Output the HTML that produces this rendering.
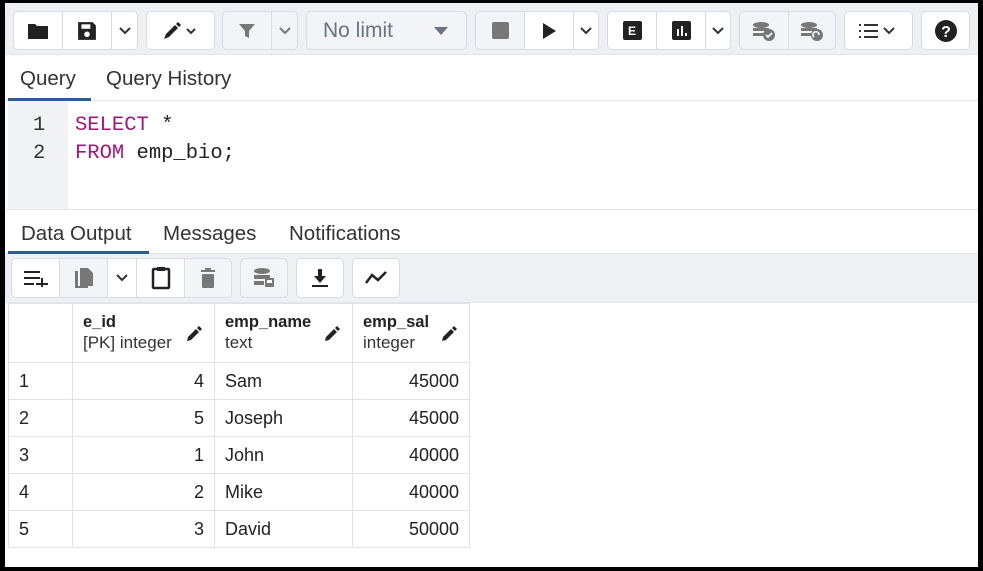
<!DOCTYPE html>
<html><head><meta charset="utf-8"><style>
*{box-sizing:border-box;margin:0;padding:0}
body{width:983px;height:571px;background:#000;position:relative;overflow:hidden;font-family:"Liberation Sans",sans-serif}
#app{position:absolute;left:5px;top:3px;width:973px;height:564px;background:#fff;overflow:hidden}
.tb{position:absolute;left:0;top:0;width:973px;height:52px;background:#eef0f4;border-bottom:1px solid #e2e5ea}
.g{position:absolute;top:8px;height:39px;border:1px solid #d7dbe2;border-radius:5px;background:#fff;display:flex;overflow:hidden}
.g.d{background:#f3f4f7}
.g>div{height:100%;display:flex;align-items:center;justify-content:center;border-right:1px solid #d7dbe2}
.g>div:last-child{border-right:none}
.tabs{position:absolute;left:0;width:973px;border-bottom:1px solid #dfe2e7;font-size:20.5px;color:#333}
.tabs span{position:absolute;top:12px}
.ul{position:absolute;height:3px;background:#2c5f8e;bottom:-1px}
.ed{position:absolute;left:0;top:98px;width:973px;height:108px;font-family:"Liberation Mono",monospace;font-size:20.5px}
.gut{position:absolute;left:3px;top:0;width:60px;height:108px;background:#f2f3f5}
.ln{position:absolute;left:28px;color:#333}
.code{position:absolute;left:70px;color:#222}
.kw{color:#a0157a}
.tb2{position:absolute;left:0;top:251px;width:973px;height:49px;background:#eef0f4;border-bottom:1px solid #e2e5ea}
.g2{position:absolute;top:4px;height:40px;border:1px solid #d7dbe2;border-radius:5px;background:#fff;display:flex;overflow:hidden}
.g2>div{height:100%;display:flex;align-items:center;justify-content:center;border-right:1px solid #d7dbe2}
.g2>div:last-child{border-right:none}
table{position:absolute;left:3px;top:300px;border-collapse:collapse;font-size:18px;color:#222}
td{border:1px solid #dfe2e7;height:37px;padding:0 10px;vertical-align:middle}
th{border:1px solid #dfe2e7;height:59px;text-align:left;font-weight:normal;padding:0 10px;position:relative;vertical-align:middle}
th b{font-size:16.5px;display:block;line-height:20px}
th i{font-style:normal;font-size:17px;display:block;line-height:22px;color:#333}
.pen{position:absolute;right:12px;top:22px}
.r{text-align:right}
</style></head><body><div id="app">
<div class="tb">
 <div class="g" style="left:8px;width:125px"><div style="width:49px"><svg width="22" height="18" viewBox="0 0 22 18"><path d="M1 2h7l2 2h11v13H1z" fill="#222"/></svg></div><div style="width:49px"><svg width="20" height="20" viewBox="0 0 18 18"><path d="M1 1h13l3 3v13H1z" fill="#222"/><rect x="4" y="3" width="8" height="4" fill="#fff"/><circle cx="9" cy="12" r="2.5" fill="#fff"/></svg></div><div style="flex:1"><svg width="12" height="8" viewBox="0 0 12 8"><path d="M1 1l5 5 5-5" stroke="#333" stroke-width="2" fill="none"/></svg></div></div>
 <div class="g" style="left:141px;width:69px"><div style="width:100%"><svg width="40" height="20" viewBox="0 0 40 20"><path d="M3 18l2-5 9-9 3 3-9 9z" fill="#222"/><path d="M15 3l2-2 3 3-2 2z" fill="#222"/><path d="M26 8l4 4 4-4" stroke="#333" stroke-width="2" fill="none"/></svg></div></div>
 <div class="g d" style="left:217px;width:76px"><div style="width:49px"><svg width="18" height="18" viewBox="0 0 18 18"><path d="M1 2h16l-6 7v7l-4-2V9z" fill="#777"/></svg></div><div style="flex:1"><svg width="12" height="8" viewBox="0 0 12 8"><path d="M1 1l5 5 5-5" stroke="#777" stroke-width="2" fill="none"/></svg></div></div>
 <div class="g d" style="left:301px;width:161px"><div style="width:100%;justify-content:space-between;padding:0 18px 0 16px;font-size:21px;color:#6b7280">No limit<svg width="14" height="8"><path d="M0 0h14L7 8z" fill="#6b7280"/></svg></div></div>
 <div class="g" style="left:470px;width:124px"><div style="width:49px;background:#f3f4f7"><div style="width:17px;height:17px;background:#777;border-radius:2px"></div></div><div style="width:49px"><svg width="16" height="18"><path d="M2 1l13 8-13 8z" fill="#222"/></svg></div><div style="flex:1"><svg width="12" height="8" viewBox="0 0 12 8"><path d="M1 1l5 5 5-5" stroke="#333" stroke-width="2" fill="none"/></svg></div></div>
 <div class="g" style="left:602px;width:124px"><div style="width:49px"><div style="width:19px;height:19px;background:#222;border-radius:2px;color:#fff;font-size:12px;font-weight:bold;display:flex;align-items:center;justify-content:center">E</div></div><div style="width:49px"><svg width="19" height="19"><rect width="19" height="19" rx="2" fill="#222"/><rect x="5" y="8" width="2" height="7" fill="#fff"/><rect x="9" y="5" width="2" height="10" fill="#fff"/><rect x="13" y="12" width="2" height="3" fill="#fff"/></svg></div><div style="flex:1"><svg width="12" height="8" viewBox="0 0 12 8"><path d="M1 1l5 5 5-5" stroke="#333" stroke-width="2" fill="none"/></svg></div></div>
 <div class="g d" style="left:734px;width:97px"><div style="width:49px"><svg width="24" height="20"><ellipse cx="9" cy="4" rx="8" ry="3" fill="#777"/><rect x="1" y="7" width="16" height="3" fill="#777"/><rect x="1" y="12" width="10" height="3" fill="#777"/><circle cx="17" cy="14" r="6" fill="#777"/><path d="M14 14l2 2 4-4" stroke="#fff" stroke-width="1.6" fill="none"/></svg></div><div style="flex:1"><svg width="24" height="20"><ellipse cx="9" cy="4" rx="8" ry="3" fill="#777"/><rect x="1" y="7" width="16" height="3" fill="#777"/><rect x="1" y="12" width="10" height="3" fill="#777"/><circle cx="17" cy="14" r="6" fill="#777"/><path d="M14 16a3 3 0 1 1 5-2" stroke="#fff" stroke-width="1.6" fill="none"/></svg></div></div>
 <div class="g" style="left:839px;width:69px"><div style="width:100%"><svg width="44" height="20"><g fill="#333"><rect x="2" y="3" width="2" height="2"/><rect x="2" y="9" width="2" height="2"/><rect x="2" y="15" width="2" height="2"/><rect x="7" y="3" width="14" height="2"/><rect x="7" y="9" width="14" height="2"/><rect x="7" y="15" width="14" height="2"/></g><path d="M27 7l5 5 5-5" stroke="#333" stroke-width="2" fill="none"/></svg></div></div>
 <div class="g" style="left:916px;width:49px"><div style="width:100%"><svg width="22" height="22"><circle cx="11" cy="11" r="11" fill="#222"/><text x="11" y="17" text-anchor="middle" font-size="16" font-weight="bold" fill="#fff" font-family="Liberation Sans">?</text></svg></div></div>
</div>
<div class="tabs" style="top:52px;height:46px"><span style="left:15px">Query</span><span style="left:101px">Query History</span><div class="ul" style="left:3px;width:83px"></div></div>
<div class="ed"><div class="gut"></div><div class="ln" style="top:13px">1</div><div class="ln" style="top:41px">2</div>
<div class="code" style="top:13px"><span class="kw">SELECT</span> *</div><div class="code" style="top:41px"><span class="kw">FROM</span> emp_bio;</div></div>
<div class="tabs" style="top:206px;height:45px;border-top:1px solid #e2e5ea"><span style="left:16px">Data Output</span><span style="left:158px">Messages</span><span style="left:284px">Notifications</span><div class="ul" style="left:3px;width:141px"></div></div>
<div class="tb2">
 <div class="g2" style="left:6px;width:221px"><div style="width:48px"><svg width="26" height="18"><g fill="#222"><rect x="1" y="2" width="16" height="2"/><rect x="1" y="8" width="16" height="2"/><rect x="1" y="14" width="10" height="2"/><rect x="13" y="14" width="12" height="2"/><rect x="18" y="9" width="2" height="12"/></g></svg></div><div style="width:48px;background:#f3f4f7"><svg width="20" height="22"><path d="M1 4h3v15h10v2H1z" fill="#777"/><path d="M6 1h8l5 5v13H6z" fill="#777"/></svg></div><div style="width:29px"><svg width="12" height="8" viewBox="0 0 12 8"><path d="M1 1l5 5 5-5" stroke="#333" stroke-width="2" fill="none"/></svg></div><div style="width:48px"><svg width="20" height="24"><rect x="2" y="3" width="16" height="19" rx="1" fill="none" stroke="#222" stroke-width="2.5"/><rect x="6" y="1" width="8" height="4" fill="#222"/></svg></div><div style="flex:1;background:#f3f4f7"><svg width="14" height="20"><rect x="0" y="2" width="14" height="2" fill="#777"/><rect x="4" y="0" width="6" height="2" fill="#777"/><rect x="1" y="6" width="12" height="14" rx="1" fill="#777"/></svg></div></div>
 <div class="g2" style="left:235px;width:48px;background:#f3f4f7"><div style="width:100%"><svg width="22" height="22"><ellipse cx="9" cy="4" rx="8" ry="3" fill="#777"/><rect x="1" y="8" width="16" height="4" fill="#777"/><rect x="1" y="14" width="10" height="4" fill="#777"/><rect x="12" y="11" width="9" height="9" fill="#777"/><rect x="14" y="13" width="5" height="3" fill="#fff"/></svg></div></div>
 <div class="g2" style="left:291px;width:48px"><div style="width:100%"><svg width="18" height="20"><path d="M7 1h4v7h4l-6 7-6-7h4z" fill="#222"/><rect x="1" y="17" width="16" height="2" fill="#222"/></svg></div></div>
 <div class="g2" style="left:347px;width:48px"><div style="width:100%"><svg width="24" height="14"><path d="M2 12l6-8 6 5 8-8" stroke="#222" stroke-width="2.5" fill="none"/></svg></div></div>
</div>
<table>
<tr><th style="width:64px"></th><th style="width:142px"><b>e_id</b><i>[PK] integer</i><svg class="pen" width="16" height="16"><path d="M1 15l1-4 8-8 3 3-8 8z M11 2l2-2 3 3-2 2z" fill="#222"/></svg></th><th style="width:138px"><b>emp_name</b><i>text</i><svg class="pen" width="16" height="16"><path d="M1 15l1-4 8-8 3 3-8 8z M11 2l2-2 3 3-2 2z" fill="#222"/></svg></th><th style="width:117px"><b>emp_sal</b><i>integer</i><svg class="pen" width="16" height="16"><path d="M1 15l1-4 8-8 3 3-8 8z M11 2l2-2 3 3-2 2z" fill="#222"/></svg></th></tr>
<tr><td>1</td><td class="r">4</td><td>Sam</td><td class="r">45000</td></tr>
<tr><td>2</td><td class="r">5</td><td>Joseph</td><td class="r">45000</td></tr>
<tr><td>3</td><td class="r">1</td><td>John</td><td class="r">40000</td></tr>
<tr><td>4</td><td class="r">2</td><td>Mike</td><td class="r">40000</td></tr>
<tr><td>5</td><td class="r">3</td><td>David</td><td class="r">50000</td></tr>
</table>
</div></body></html>
